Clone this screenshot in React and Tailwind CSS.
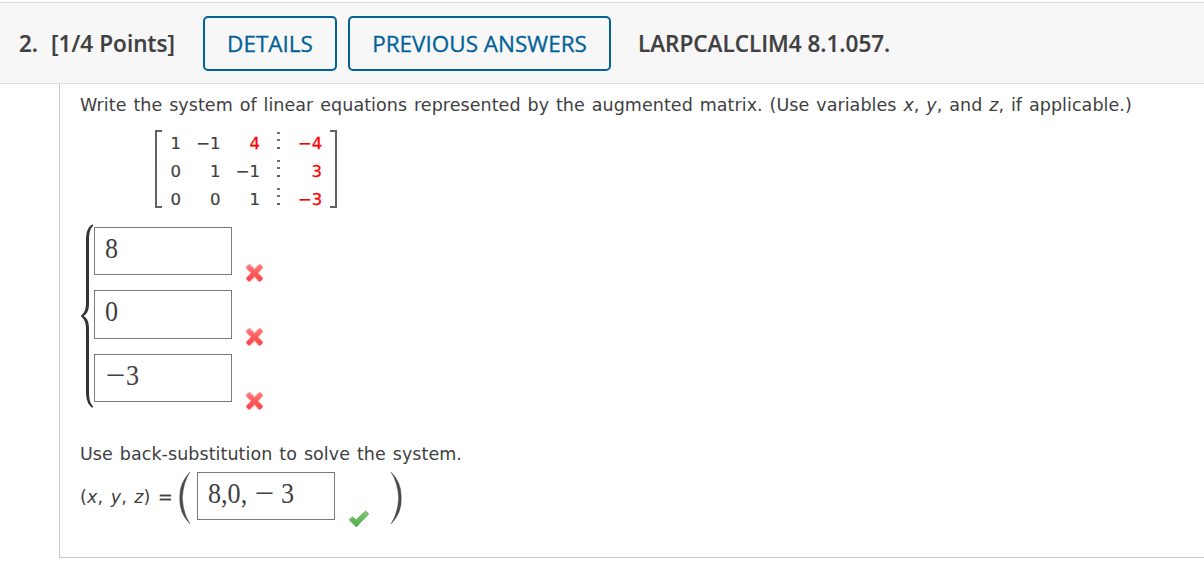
import React from "react";

const MATRIX = [
  ["1", "−1", "4", "−4"],
  ["0", "1", "−1", "3"],
  ["0", "0", "1", "−3"],
];
const RED = new Set(["0-2", "0-3", "1-3", "2-3"]);

function HeaderButton({ children, className }) {
  return (
    <button
      className={`flex h-[55px] items-center justify-center rounded-[5px] border-2 border-[#006298] pt-px text-[22.5px] font-medium whitespace-nowrap text-[#006298] [-webkit-text-stroke:0.3px_#006298] ${className}`}
    >
      {children}
    </button>
  );
}

function Wrong() {
  return (
    <svg className="block h-5 w-5" viewBox="0 0 20 20" aria-label="Incorrect">
      <defs>
        <linearGradient id="wrongFill" x1="0" y1="0" x2="0" y2="1">
          <stop offset="0" stopColor="#ff7a7a" />
          <stop offset="1" stopColor="#f93d42" />
        </linearGradient>
      </defs>
      <path
        d="M4.4 4.4 L14.6 15.6 M14.6 4.4 L4.4 15.6"
        fill="none"
        stroke="#ffb8b8"
        strokeWidth="6.4"
        strokeLinecap="round"
      />
      <path
        d="M4.2 1.8 L9.5 6.9 L14.8 1.8 L17.6 4.6 L12.5 10 L17.6 15.4 L14.8 18.2 L9.5 13.1 L4.2 18.2 L1.4 15.4 L6.5 10 L1.4 4.6 Z"
        fill="url(#wrongFill)"
        stroke="url(#wrongFill)"
        strokeWidth="0.8"
        strokeLinejoin="round"
      />
    </svg>
  );
}

function Correct() {
  return (
    <svg className="block h-[18px] w-[22px]" viewBox="0 0 22 18" aria-label="Correct">
      <defs>
        <linearGradient id="correctFill" x1="0" y1="0" x2="0" y2="1">
          <stop offset="0" stopColor="#83cb75" />
          <stop offset="1" stopColor="#4da74a" />
        </linearGradient>
      </defs>
      <path
        d="M1.2 9.8 L4.4 7 L8 9.8 L17.6 1 L20.6 3.9 L8.4 17 Z"
        fill="url(#correctFill)"
        stroke="#71b66a"
        strokeWidth="1"
        strokeLinejoin="round"
      />
    </svg>
  );
}

function AnswerBox({ children, className }) {
  return (
    <div
      className={`flex w-[138px] shrink-0 items-start border border-[#7a7a7a] pl-[10px] font-['Liberation_Serif',serif] text-[30px] leading-[40px] whitespace-nowrap text-[#404041] ${className}`}
    >
      {children}
    </div>
  );
}

function Digits({ children }) {
  return <span className="inline-block origin-left scale-x-[0.87]">{children}</span>;
}

function Minus({ className }) {
  return <span className={`inline-block origin-left scale-x-[1.15] ${className}`}>−</span>;
}

function Dots() {
  return (
    <div className="flex h-7 flex-col items-center pt-[2px] pr-px">
      <span className="block h-[2px] w-[3px] bg-[#707070]" />
      <span className="mt-[5px] block h-[2px] w-[3px] bg-[#707070]" />
      <span className="mt-[6px] block h-[2px] w-[3px] bg-[#606060]" />
    </div>
  );
}

function Matrix() {
  return (
    <div className="ml-[75px] flex h-[82px] w-[182px]">
      <div className="-mt-px h-[78px] w-[7px] shrink-0 border-y-2 border-l-2 border-[#606266]" />
      <div className="-mt-px grid h-[84px] w-[168px] grid-cols-[19px_39.5px_39.5px_38px_24px] grid-rows-[28px_28px_28px] text-right text-[16.5px] leading-[27px] text-[#404041]">
        {MATRIX.map((row, r) => (
          <React.Fragment key={r}>
            {row.map((v, c) => (
              <React.Fragment key={c}>
                {c === 3 && <Dots />}
                <span className={`whitespace-nowrap ${RED.has(`${r}-${c}`) ? "text-[#ff0000] [-webkit-text-stroke:0.3px_#ff0000]" : "[-webkit-text-stroke:0.2px_#404041]"}`}>{v}</span>
              </React.Fragment>
            ))}
          </React.Fragment>
        ))}
      </div>
      <div className="-mt-px h-[78px] w-[7px] shrink-0 border-y-2 border-r-2 border-[#606266]" />
    </div>
  );
}

export default function App() {
  return (
    <div className="h-[588px] w-[1204px] overflow-hidden bg-white pt-[2px] font-['DejaVu_Sans',sans-serif] text-[#404041]">
      <header className="flex h-[82px] items-center border-y border-[#dcdcdc] bg-[#f7f7f7] pl-[19px] font-['Open_Sans',sans-serif] text-[22.5px] font-semibold [-webkit-text-stroke:0.2px_#404041]">
        <span className="w-[32px] pt-[2px] whitespace-nowrap">2.</span>
        <span className="w-[152px] pt-[2px] tracking-[0.08px] whitespace-nowrap">[1/4 Points]</span>
        <HeaderButton className="w-[134px]">DETAILS</HeaderButton>
        <HeaderButton className="ml-[11px] w-[263px]">PREVIOUS ANSWERS</HeaderButton>
        <span className="ml-[27px] pt-[2px] whitespace-nowrap">LARPCALCLIM4 8.1.057.</span>
      </header>

      <main className="ml-[59px] h-[474px] border-b border-l border-[#c8c8c8] pl-[20px]">
        <p className="h-[47px] pt-[9px] text-[17.5px] leading-6 tracking-[0.06px] [word-spacing:1.25px] whitespace-nowrap">
          Write the system of linear equations represented by the augmented matrix. (Use variables <i>x</i>, <i>y</i>, and{" "}
          <i>z</i>, if applicable.)
        </p>

        <Matrix />

        <div className="mt-[9px] flex">
          <svg className="mt-px block h-[186px] w-[14px] shrink-0" viewBox="0 0 14 186">
            <path
              d="M12.6 1.2 C8 4 6 8 6 18 V80 C6 87 4 90 0.8 93 C4 96 6 99 6 106 V168 C6 177 8 182 12.6 184.8 L13.2 183.6 C10 180 9 176 9 168 V106 C9 98 7 95 3.4 93 C7 91 9 88 9 80 V18 C9 10 10 6 13.2 2.4 Z"
              fill="#333"
            />
          </svg>
          <div className="flex flex-col gap-[15px] pt-[5px]">
            <div className="flex h-[49px] gap-[13px]">
              <AnswerBox className="h-[48px]"><Digits>8</Digits></AnswerBox>
              <div className="pt-[36px]"><Wrong /></div>
            </div>
            <div className="-mt-px flex h-[49px] gap-[13px]">
              <AnswerBox className="h-[49px]"><Digits>0</Digits></AnswerBox>
              <div className="pt-[37px]"><Wrong /></div>
            </div>
            <div className="flex h-[48px] gap-[13px]">
              <AnswerBox className="h-[48px]"><Minus className="mr-[3px] ml-px" /><Digits>3</Digits></AnswerBox>
              <div className="pt-[37px]"><Wrong /></div>
            </div>
          </div>
        </div>

        <p className="mt-[33px] text-[17.5px] leading-6 tracking-[0.06px] [word-spacing:1.3px] whitespace-nowrap">
          Use back-substitution to solve the system.
        </p>

        <div className="mt-[5px] flex">
          <span className="w-[99px] pt-[14px] text-[17.5px] leading-6 tracking-[0.2px] [word-spacing:1.5px] whitespace-nowrap">
            (<i>x</i>, <i>y</i>, <i>z</i>) <span className="[-webkit-text-stroke:0.3px_#404041]">=</span>
          </span>
          <svg className="block h-[54px] w-[14px] shrink-0" viewBox="0 0 14 54">
            <path d="M11 1 Q0 12 0.8 27 Q0 42 11 53 Q4 42 3.4 27 Q4 12 11 1 Z" fill="#4a4a4a" stroke="#4a4a4a" strokeWidth="0.4" />
          </svg>
          <AnswerBox className="mt-px ml-[4px] h-[48px]">
            <Digits>8,0,</Digits>
            <Minus className="ml-[2px]" />
            <span className="ml-[9px]"><Digits>3</Digits></span>
          </AnswerBox>
          <div className="ml-[13px] pt-[39px]"><Correct /></div>
          <svg className="ml-[19px] block h-[54px] w-[14px] shrink-0" viewBox="0 0 14 54">
            <path d="M2 1 Q13 12 12.2 27 Q13 42 2 53 Q9 42 9.6 27 Q9 12 2 1 Z" fill="#4a4a4a" stroke="#4a4a4a" strokeWidth="0.4" />
          </svg>
        </div>
      </main>
    </div>
  );
}
